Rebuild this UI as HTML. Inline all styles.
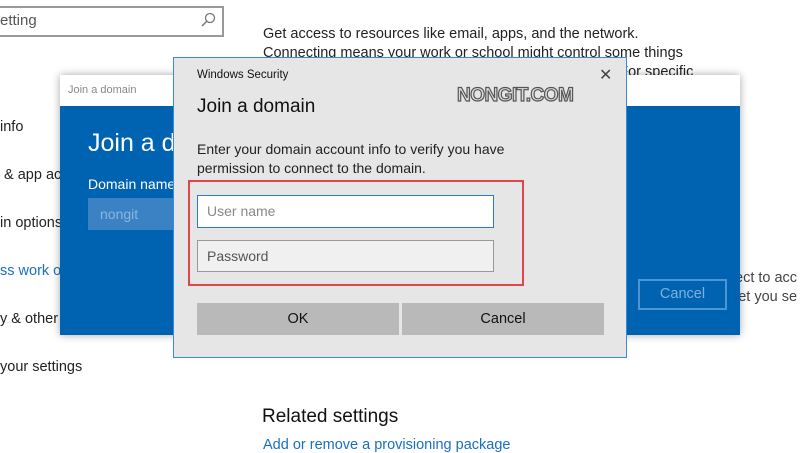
<!DOCTYPE html><html><head><style>
body{margin:0;width:800px;height:450px;overflow:hidden;background:#fff;position:relative;font-family:"Liberation Sans",sans-serif;}
.a{position:absolute;white-space:nowrap;}
</style></head><body>
<div class="a" style="left:-2px;top:6px;width:222px;height:27px;border:2px solid #999;"></div>
<div class="a" style="left:0;top:12px;font-size:15px;color:#555">etting</div>
<svg class="a" style="left:200px;top:12px" width="16" height="16"><circle cx="10" cy="6" r="4.5" fill="none" stroke="#777" stroke-width="1.3"/><line x1="7" y1="9" x2="2" y2="14" stroke="#777" stroke-width="1.5"/></svg>
<div class="a" style="left:263px;top:25px;font-size:14.5px;line-height:19px;color:#222">Get access to resources like email, apps, and the network.<br>Connecting means your work or school might control some things<br>on this device, such as which settings you can change. For specific</div>
<div class="a" style="left:0;top:103px;font-size:14.5px;color:#222;line-height:48px">info<br>&nbsp;&amp; app access<br>in options<br><span style="color:#1a6fc2">ss work or school</span><br>y &amp; other<br>your settings</div>
<div class="a" style="left:735px;top:269px;font-size:14.5px;line-height:19px;color:#444">ect to acc<br>let you se</div>
<div class="a" style="left:60px;top:75px;width:680px;height:260px;background:#0063b1;box-shadow:0 0 8px rgba(0,0,0,.35)">
<div style="background:#fff;height:31px;font-size:11px;color:#888;padding:9px 0 0 8px;box-sizing:border-box">Join a domain</div>
<div class="a" style="left:28px;top:54px;font-size:25px;color:#fff">Join a domain</div>
<div class="a" style="left:28px;top:101px;font-size:14px;color:#fff">Domain name</div>
<div class="a" style="left:28px;top:123px;width:200px;height:32px;background:#3a82c4;color:#8cb6de;font-size:14px;line-height:32px;padding-left:12px;box-sizing:border-box">nongit</div>
<div class="a" style="left:578px;top:204px;width:89px;height:31px;border:2px solid #4d95d4;box-sizing:border-box;color:#7fb0de;font-size:14.5px;text-align:center;line-height:27px">Cancel</div>
</div>
<div class="a" style="left:173px;top:57px;width:454px;height:301px;background:#e6e6e6;border:1px solid #3b8ad6;box-sizing:border-box">
<div class="a" style="left:23px;top:11px;font-size:11.5px;color:#111">Windows Security</div>
<div class="a" style="left:425px;top:7px;font-size:16px;color:#444">✕</div>
<div class="a" style="left:283px;top:27px;font-size:19px;font-weight:bold;color:#ddd;-webkit-text-stroke:1.2px #555;letter-spacing:-0.5px">NONGIT.COM</div>
<div class="a" style="left:23px;top:38px;font-size:19px;color:#111">Join a domain</div>
<div class="a" style="left:23px;top:82px;font-size:14px;line-height:19px;color:#222">Enter your domain account info to verify you have<br>permission to connect to the domain.</div>
<div class="a" style="left:14px;top:122px;width:336px;height:106px;border:2px solid #e0454a;box-sizing:border-box"></div>
<div class="a" style="left:23px;top:137px;width:297px;height:33px;background:#fff;border:1px solid #2a7bd2;box-sizing:border-box;font-size:14px;color:#888;line-height:31px;padding-left:9px">User name</div>
<div class="a" style="left:23px;top:182px;width:297px;height:32px;background:#f0f0f0;border:1px solid #999;box-sizing:border-box;font-size:14px;color:#555;line-height:30px;padding-left:9px">Password</div>
<div class="a" style="left:23px;top:245px;width:202px;height:32px;background:#b9b9b9;font-size:14.5px;color:#111;text-align:center;line-height:32px">OK</div>
<div class="a" style="left:228px;top:245px;width:202px;height:32px;background:#b9b9b9;font-size:14.5px;color:#111;text-align:center;line-height:32px">Cancel</div>
</div>
<div class="a" style="left:262px;top:406px;font-size:19px;color:#111">Related settings</div>
<div class="a" style="left:263px;top:437px;font-size:14.5px;color:#1a6fc2">Add or remove a provisioning package</div>
</body></html>
